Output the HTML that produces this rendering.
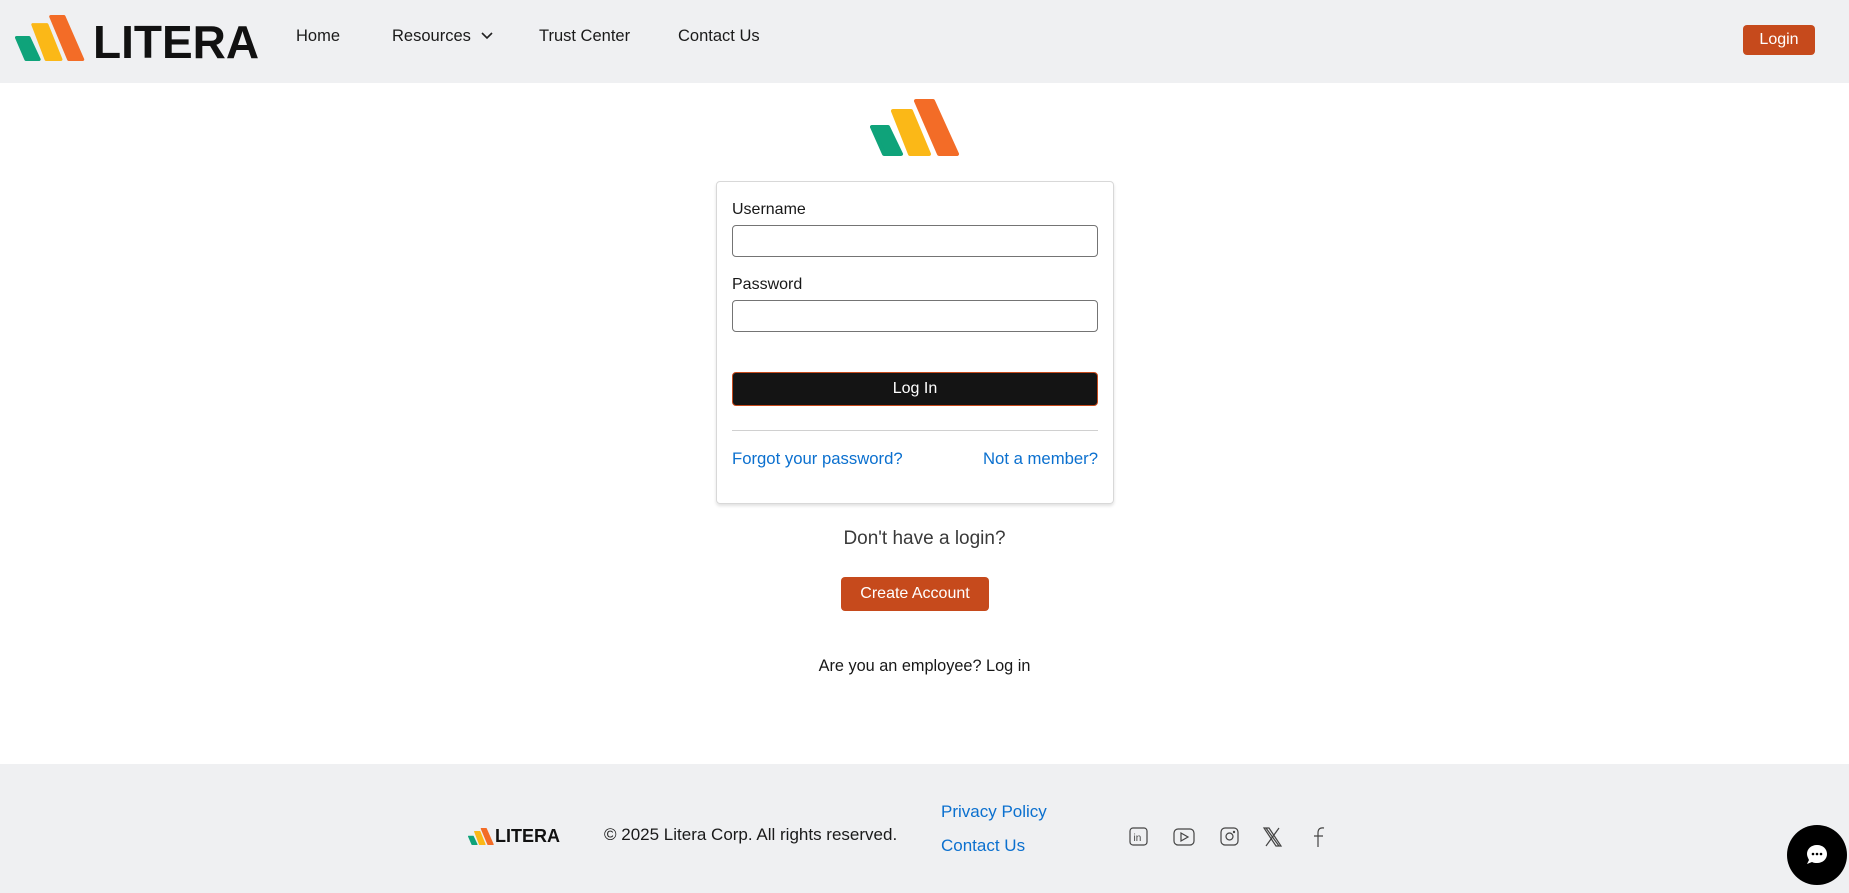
<!DOCTYPE html>
<html><head><meta charset="utf-8"><style>
*{margin:0;padding:0;box-sizing:border-box}
body{width:1849px;height:893px;position:relative;background:#fff;font-family:"Liberation Sans",sans-serif;color:#181818;overflow:hidden}
.abs{position:absolute}
header{position:absolute;left:0;top:0;width:1849px;height:83px;background:#eff0f2}
.nav{position:absolute;top:27px;font-size:16.5px;color:#1a1a1a}
.btn{position:absolute;background:#c64a1c;color:#fff;border-radius:4px;text-align:center}
.lbl{position:absolute;left:732px;font-size:16px;color:#181818}
.inp{position:absolute;left:732px;width:366px;height:32px;border:1px solid #747474;border-radius:4px;background:#fff}
a{color:#0b70cf;text-decoration:none}
footer{position:absolute;left:0;top:764px;width:1849px;height:129px;background:#eff0f2}
</style></head><body>
<svg width="0" height="0" style="position:absolute"><defs>
<g id="lg" stroke-linejoin="round" stroke-width="4">
<polygon points="2,28 18,28 31,55 14,55" fill="#0fa37a" stroke="#0fa37a"/>
<polygon points="23,12 41,12 59,55 40,55" fill="#fbb817" stroke="#fbb817"/>
<polygon points="46,2 63,2 87,55 69,55" fill="#f36c27" stroke="#f36c27"/>
</g></defs></svg>
<header>
<svg class="abs" style="left:15px;top:15px" width="70" height="46" viewBox="0 0 90 57" preserveAspectRatio="none"><use href="#lg"/></svg>
<div class="abs" style="left:93px;top:17px;font-size:46px;font-weight:bold;color:#111;line-height:50px">LITERA</div>
<div class="nav" style="left:296px">Home</div>
<div class="nav" style="left:392px">Resources <svg width="14" height="10" viewBox="0 0 14 10" style="margin-left:5px"><path d="M2 2 L7 7 L12 2" stroke="#222" stroke-width="1.6" fill="none"/></svg></div>
<div class="nav" style="left:539px">Trust Center</div>
<div class="nav" style="left:678px">Contact Us</div>
<div class="btn" style="left:1743px;top:25px;width:72px;height:30px;font-size:16px;line-height:30px">Login</div>
</header>

<svg class="abs" style="left:870px;top:99px" width="90" height="57" viewBox="0 0 90 57"><use href="#lg"/></svg>

<div class="abs" style="left:716px;top:181px;width:398px;height:323px;border:1px solid #d8d8d8;border-radius:4px;box-shadow:0 2px 3px rgba(0,0,0,.12)"></div>
<div class="lbl" style="top:201px">Username</div>
<div class="inp" style="top:225px"></div>
<div class="lbl" style="top:276px">Password</div>
<div class="inp" style="top:300px"></div>
<div class="abs" style="left:732px;top:372px;width:366px;height:34px;background:#141414;border:1px solid #c64a1c;border-radius:4px;color:#fff;font-size:16px;text-align:center;line-height:32px">Log In</div>
<div class="abs" style="left:732px;top:430px;width:366px;height:1px;background:#d0d0d0"></div>
<a class="abs" style="left:732px;top:449px;font-size:16.7px">Forgot your password?</a>
<a class="abs" style="right:751px;top:449px;font-size:16.7px">Not a member?</a>

<div class="abs" style="left:0;width:1849px;top:528px;text-align:center;font-size:19px;color:#3a3a3a">Don't have a login?</div>
<div class="btn" style="left:841px;top:577px;width:148px;height:34px;font-size:16px;line-height:34px">Create Account</div>
<div class="abs" style="left:0;width:1849px;top:657px;text-align:center;font-size:16.3px">Are you an employee? Log in</div>

<footer>
<svg class="abs" style="left:468px;top:64px" width="26" height="17" viewBox="0 0 90 57" preserveAspectRatio="none"><use href="#lg"/></svg>
<div class="abs" style="left:495px;top:62px;font-size:18px;font-weight:bold;color:#111">LITERA</div>
<div class="abs" style="left:604px;top:61px;font-size:17px;color:#1a1a1a">© 2025 Litera Corp. All rights reserved.</div>
<a class="abs" style="left:941px;top:38px;font-size:17px">Privacy Policy</a>
<a class="abs" style="left:941px;top:72px;font-size:17px">Contact Us</a>
<svg class="abs" style="left:1129px;top:61px" width="200" height="24" viewBox="0 0 200 24" fill="none" stroke="#444" stroke-width="1.2">
<rect x="1" y="3" width="17" height="17" rx="3"/><text x="4.5" y="16" font-size="10" font-family="Liberation Sans" fill="#444" stroke="none">in</text>
<rect x="45" y="4" width="20" height="16" rx="4"/><path d="M52 8 L59 12 L52 16Z"/>
<rect x="92" y="3" width="17" height="17" rx="4"/><circle cx="100.5" cy="11.5" r="3.5"/><circle cx="105" cy="7" r=".6"/>
<path d="M137 3 L150 21 M150 3 L137 21 M135 3 L140 3 L152 21 L147 21Z"/>
<path d="M195 3 Q189 2 189 8 L189 22 M185 11 L194 11"/>
</svg>
</footer>
<div class="abs" style="left:1787px;top:825px;width:60px;height:60px;border-radius:50%;background:#000"></div>
<svg class="abs" style="left:1804px;top:842px" width="26" height="26" viewBox="0 0 26 26"><path d="M13 3 C19 3 23 7 23 12 C23 17 19 21 13 21 C11 21 10 21 8 20 L3 22 L5 18 C4 16 3 14 3 12 C3 7 7 3 13 3Z" fill="#fff"/><circle cx="9" cy="12" r="1.3"/><circle cx="13" cy="12" r="1.3"/><circle cx="17" cy="12" r="1.3"/></svg>
</body></html>
